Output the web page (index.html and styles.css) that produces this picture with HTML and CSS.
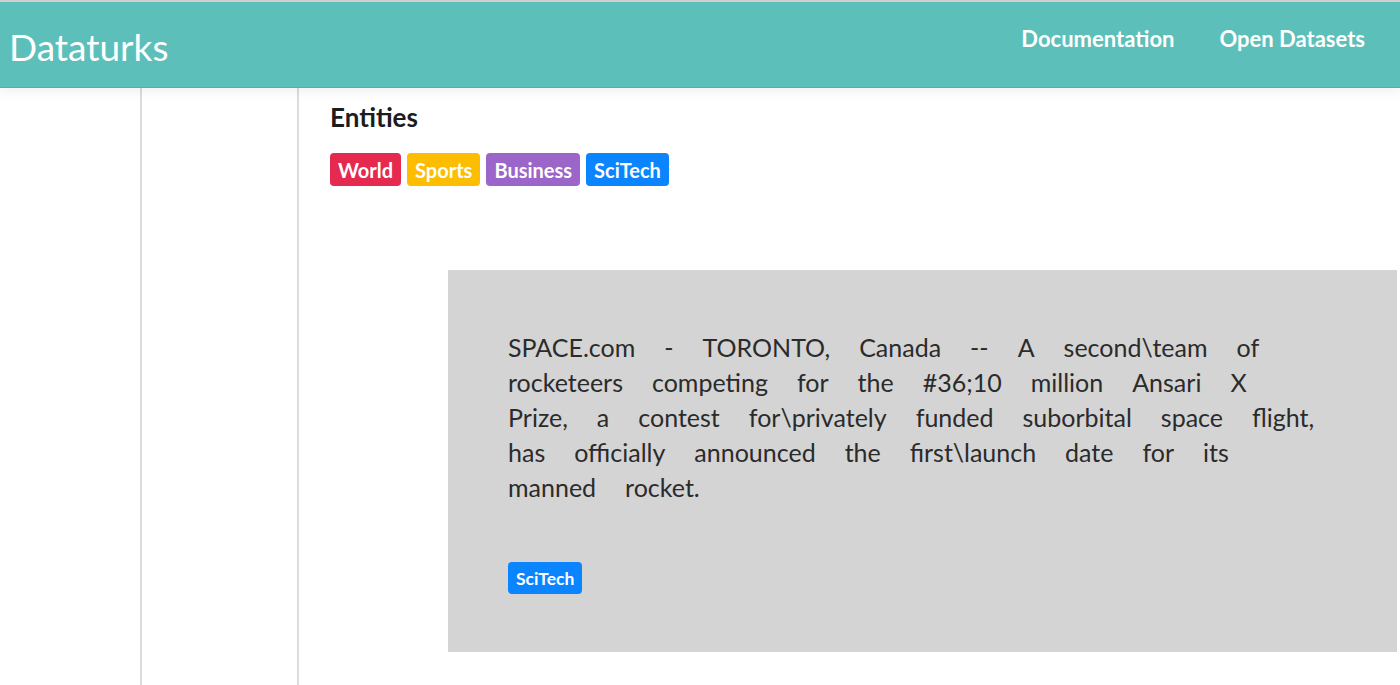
FILE: index.html
```html
<!DOCTYPE html>
<html lang="en">
<head>
<meta charset="utf-8">
<title>Dataturks</title>
<link rel="stylesheet" href="styles.css">
</head>
<body>
<header class="topbar">
  <div class="brand">Dataturks</div>
  <nav class="links">
    <a class="link" href="#">Documentation</a>
    <a class="link" href="#">Open Datasets</a>
  </nav>
</header>
<div class="main">
  <div class="col col-a"></div>
  <div class="col col-b"></div>
  <section class="content">
    <h2 class="heading">Entities</h2>
    <div class="labels">
      <span class="label red">World</span>
      <span class="label yellow">Sports</span>
      <span class="label purple">Business</span>
      <span class="label blue">SciTech</span>
    </div>
    <div class="card">
      <p class="text">
        <span>SPACE.com</span><span>-</span><span>TORONTO,</span><span>Canada</span><span>--</span><span>A</span><span>second\team</span><span>of</span><span>rocketeers</span><span>competing</span><span>for</span><span>the</span><span>#36;10</span><span>million</span><span>Ansari</span><span>X</span><span>Prize,</span><span>a</span><span>contest</span><span>for\privately</span><span>funded</span><span>suborbital</span><span>space</span><span>flight,</span><span>has</span><span>officially</span><span>announced</span><span>the</span><span>first\launch</span><span>date</span><span>for</span><span>its</span><span>manned</span><span>rocket.</span>
      </p>
      <span class="label small blue">SciTech</span>
    </div>
  </section>
</div>
</body>
</html>
```

FILE: styles.css
```css
* { box-sizing: border-box; }

html, body {
  margin: 0;
  padding: 0;
  background: #ffffff;
  font-family: Lato, "Open Sans", "Liberation Sans", sans-serif;
}

.topbar {
  position: relative;
  z-index: 2;
  height: 88px;
  background: #5cbfb9;
  border-top: 2px solid #cfcfcf;
  border-bottom: 1px solid #4fb3ad;
  display: flex;
  justify-content: space-between;
  box-shadow: 0 3px 12px rgba(0, 0, 0, 0.07);
}

.brand {
  color: #ffffff;
  font-size: 37px;
  line-height: 1;
  padding: 26px 0 0 9px;
}

.links {
  display: flex;
  gap: 45px;
  padding: 24px 35px 0 0;
}

.link {
  color: #ffffff;
  font-size: 22px;
  font-weight: 700;
  text-decoration: none;
  line-height: 1.2;
  height: 28px;
}

.main {
  display: grid;
  grid-template-columns: 142px 157px 1fr;
  min-height: calc(100vh - 88px);
}

.col {
  border-right: 2px solid #dcdcdc;
}

.content {
  padding: 0 0 40px 31px;
}

.heading {
  margin: 14px 0 0;
  font-size: 26px;
  font-weight: 700;
  line-height: 1.2;
  color: #1b1c1d;
}

.labels {
  display: flex;
  gap: 6px;
  margin-top: 20px;
}

.label {
  display: inline-flex;
  align-items: center;
  height: 33px;
  padding: 0 8px;
  border-radius: 4px;
  color: #ffffff;
  font-size: 20px;
  font-weight: 700;
}

.red { background: #e5294f; }
.yellow { background: #fdbd00; }
.purple { background: #9b65c9; }
.blue { background: #0a84ff; }

.card {
  margin: 84px 0 0 118px;
  width: 949px;
  background: #d4d4d4;
  padding: 60px 66px 58px 60px;
}

.text {
  margin: 0;
  display: flex;
  flex-wrap: wrap;
  column-gap: 29px;
  font-size: 25px;
  line-height: 35px;
  color: #2b2b2b;
}

.label.small {
  margin-top: 57px;
  height: 32px;
  font-size: 17.5px;
  padding: 0 8px;
}
```
